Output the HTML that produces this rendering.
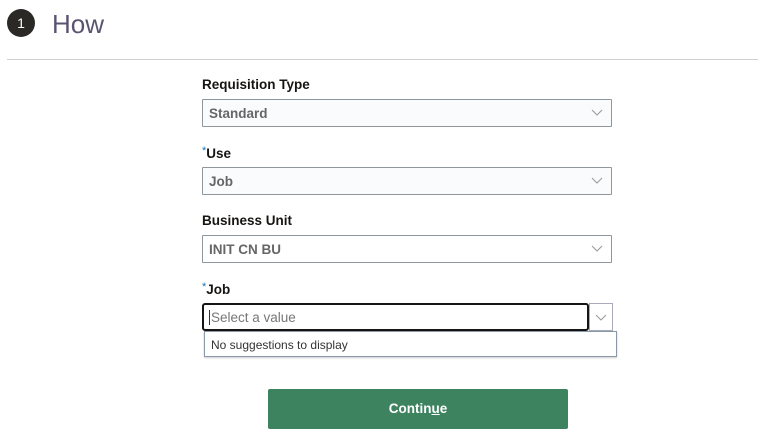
<!DOCTYPE html><html><head><style>
body{margin:0;width:758px;height:446px;background:#fff;font-family:"Liberation Sans",sans-serif;position:relative;overflow:hidden}
.a{position:absolute}
.lbl{font-size:13.5px;font-weight:bold;color:#161513}
.box{border:1px solid #8f979c;background:#f9fbfc;border-radius:1px;box-sizing:border-box;height:28px;font-size:13.5px;color:#666;font-weight:bold;padding:6px 0 0 6px}
.chev{position:absolute;right:8px;top:9px}
</style></head><body>
<div class="a" style="left:7px;top:9px;width:28px;height:28px;border-radius:50%;background:#2b2926;color:#fff;font-size:14px;text-align:center;line-height:28px">1</div>
<div class="a" style="left:52px;top:9px;font-size:26px;color:#5a5470">How</div>
<div class="a" style="left:7px;top:59px;width:751px;height:1px;background:#cfcfcf"></div>

<div class="a lbl" style="left:202px;top:77px">Requisition Type</div>
<div class="a box" style="left:202px;top:99px;width:410px">Standard<svg class="chev" width="12" height="8"><path d="M1 1l5 5 5-5" fill="none" stroke="#999" stroke-width="1"/></svg></div>
<div class="a lbl" style="left:202px;top:145px"><span style="font-weight:normal;color:#1a6fb0;vertical-align:4px;font-size:11px">*</span>Use</div>
<div class="a box" style="left:202px;top:167px;width:410px">Job<svg class="chev" width="12" height="8"><path d="M1 1l5 5 5-5" fill="none" stroke="#999" stroke-width="1"/></svg></div>
<div class="a lbl" style="left:202px;top:213px">Business Unit</div>
<div class="a box" style="left:202px;top:235px;width:410px;background:#fff">INIT CN BU<svg class="chev" width="12" height="8"><path d="M1 1l5 5 5-5" fill="none" stroke="#999" stroke-width="1"/></svg></div>
<div class="a lbl" style="left:202px;top:281px"><span style="font-weight:normal;color:#1a6fb0;vertical-align:4px;font-size:11px">*</span>Job</div>
<div class="a" style="left:202px;top:303px;width:387px;height:28px;box-sizing:border-box;border:2px solid #161513;border-radius:3px;font-size:13.5px;color:#777;padding:5px 0 0 5px"><span style="border-left:1px solid #333;padding-left:1px">Select a value</span></div>
<div class="a" style="left:589px;top:303px;width:24px;height:28px;box-sizing:border-box;border:1px solid #aab"><svg style="position:absolute;left:5px;top:10px" width="12" height="8"><path d="M1 1l5 5 5-5" fill="none" stroke="#999" stroke-width="1"/></svg></div>
<div class="a" style="left:204px;top:331px;width:413px;height:26px;box-sizing:border-box;border:1px solid #8a99aa;background:#fff;box-shadow:0 1px 2px rgba(0,0,0,.2);font-size:12px;color:#333;padding:6px 0 0 6px">No suggestions to display</div>
<div class="a" style="left:268px;top:389px;width:300px;height:40px;background:#3e8360;border-radius:2px;color:#fff;font-weight:bold;font-size:13.5px;text-align:center;line-height:40px">Contin<u>u</u>e</div>
</body></html>
